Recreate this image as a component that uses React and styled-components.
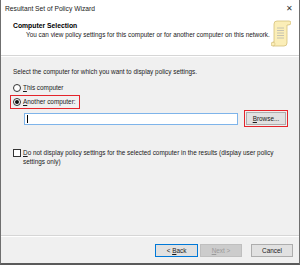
import styled, { createGlobalStyle } from 'styled-components';

const Global = createGlobalStyle`
  html, body { margin: 0; padding: 0; background: #ffffff; }
  * { box-sizing: border-box; }
`;

const Window = styled.div`
  width: 300px;
  height: 265px;
  display: flex;
  flex-direction: column;
  border-left: 1px solid #6f6f6f;
  border-right: 1px solid #6f6f6f;
  border-bottom: 2px solid #5a5a5a;
  background: #f0f0f0;
  font-family: "Liberation Sans", Arial, sans-serif;
  font-size: 6.4px;
  color: #1a1a1a;
`;

const TitleBar = styled.div`
  height: 16px;
  display: flex;
  align-items: center;
  justify-content: space-between;
  padding: 0 6px 0 4px;
  background: #ffffff;
  font-size: 6.7px;
`;

const Close = styled.span`
  font-size: 8px;
  color: #333;
`;

const Header = styled.div`
  height: 39px;
  display: flex;
  justify-content: space-between;
  align-items: flex-start;
  padding: 4px 8px 0 12px;
  background: #ffffff;
`;

const HeaderText = styled.div`
  display: flex;
  flex-direction: column;
  gap: 2px;
  padding-top: 2px;
`;

const Heading = styled.div`
  font-weight: bold;
  font-size: 6.8px;
  color: #000;
`;

const Sub = styled.div`
  padding-left: 13px;
`;

const Rule = styled.div`
  height: 2px;
  border-top: 1px solid #d6d6d6;
  border-bottom: 1px solid #ffffff;
`;

const Body = styled.div`
  flex: 1;
  display: flex;
  flex-direction: column;
  padding: 11px 10px 0 12px;
`;

const Line = styled.div`
  line-height: 8px;
`;

const Options = styled.div`
  display: flex;
  flex-direction: column;
  margin-top: 6px;
  gap: 1px;
`;

const Highlight = styled.div`
  align-self: flex-start;
  padding: ${p => (p.$on ? '2px 3px 2px 2px' : '2px 4px 2px 3px')};
  margin-left: -3px;
  border: ${p => (p.$on ? '1.5px solid #e3242b' : 'none')};
`;

const Choice = styled.label`
  display: flex;
  align-items: center;
  gap: 2px;
  line-height: 8px;
`;

const Radio = styled.span`
  width: 8px;
  height: 8px;
  border-radius: 50%;
  border: 1px solid #333;
  background: #fff;
  display: flex;
  align-items: center;
  justify-content: center;
  &::after {
    content: '';
    width: 4px;
    height: 4px;
    border-radius: 50%;
    background: ${p => (p.$checked ? '#111' : 'transparent')};
  }
`;

const InputRow = styled.div`
  display: flex;
  align-items: center;
  margin-top: 1px;
  padding-left: 11px;
  gap: 6px;
`;

const Input = styled.div`
  width: 214px;
  height: 12px;
  background: #fff;
  border: 1px solid #7eb4ea;
  padding: 1px 2px;
  &::before {
    content: '';
    display: block;
    width: 1px;
    height: 8px;
    background: #000;
  }
`;

const RedBox = styled.div`
  border: 1.5px solid #e3242b;
  padding: 1px;
`;

const Button = styled.div`
  width: ${p => p.$w || 42}px;
  height: 13px;
  display: flex;
  align-items: center;
  justify-content: center;
  background: ${p => (p.$disabled ? '#cccccc' : '#e1e1e1')};
  border: 1px solid ${p => (p.$primary ? '#0078d7' : p.$disabled ? '#bfbfbf' : '#adadad')};
  color: ${p => (p.$disabled ? '#9a9a9a' : '#1a1a1a')};
`;

const CheckRow = styled.div`
  display: flex;
  align-items: flex-start;
  gap: 2px;
  margin-top: 21px;
  padding-right: 6px;
  line-height: 9px;
`;

const Box = styled.span`
  flex: none;
  width: 8px;
  height: 8px;
  margin-top: 0.5px;
  border: 1px solid #333;
  background: #fff;
`;

const Footer = styled.div`
  height: 26px;
  display: flex;
  justify-content: flex-end;
  align-items: flex-start;
  padding: 7px 6px 0 0;
  gap: 2px;
`;

const Spacer = styled.div`
  width: 5px;
`;

const ScrollIcon = () => (
  <svg width="20" height="27" viewBox="0 0 20 27">
    <path d="M3 4 Q3 1 6 1 L18 1 Q20 1 20 3 Q20 5 17 5 L16 5 L16 23 Q16 26 13 26 L2 26 Q0 26 0 24 Q0 22 3 22 Z" fill="#fbeeb8" stroke="#d6c07a" strokeWidth="0.8" />
    <path d="M2 26 Q4 26 4 24 Q4 22 2 22" fill="none" stroke="#d6c07a" strokeWidth="0.6" />
    <path d="M6 8 H13 M6 10.5 H13 M6 13 H13 M6 15.5 H13 M6 18 H13" stroke="#b8b8b0" strokeWidth="0.8" />
  </svg>
);

export default function App() {
  return (
    <>
      <Global />
      <Window>
        <TitleBar>
          <span>Resultant Set of Policy Wizard</span>
          <Close>✕</Close>
        </TitleBar>
        <Header>
          <HeaderText>
            <Heading>Computer Selection</Heading>
            <Sub>You can view policy settings for this computer or for another computer on this network.</Sub>
          </HeaderText>
          <ScrollIcon />
        </Header>
        <Rule />
        <Body>
          <Line>Select the computer for which you want to display policy settings.</Line>
          <Options>
            <Highlight>
              <Choice><Radio /><span><u>T</u>his computer</span></Choice>
            </Highlight>
            <Highlight $on>
              <Choice><Radio $checked /><span><u>A</u>nother computer:</span></Choice>
            </Highlight>
          </Options>
          <InputRow>
            <Input />
            <RedBox>
              <Button $w={40}><span><u>B</u>rowse...</span></Button>
            </RedBox>
          </InputRow>
          <CheckRow>
            <Box />
            <span><u>D</u>o not display policy settings for the selected computer in the results (display user policy settings only)</span>
          </CheckRow>
        </Body>
        <Rule />
        <Footer>
          <Button $primary $w={43}><span>&lt; <u>B</u>ack</span></Button>
          <Button $disabled $w={42}><span><u>N</u>ext &gt;</span></Button>
          <Spacer />
          <Button $w={42}>Cancel</Button>
        </Footer>
      </Window>
    </>
  );
}
